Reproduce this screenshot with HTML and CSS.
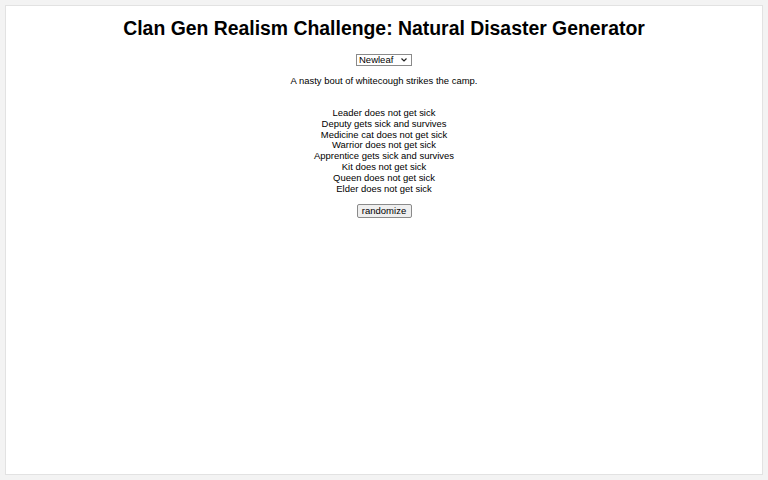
FILE: index.html
```html
<!DOCTYPE html>
<html>
<head>
<meta charset="utf-8">
<title>Natural Disaster Generator</title>
<link rel="stylesheet" href="styles.css">
</head>
<body>
<main class="page">
  <h1 class="title">Clan Gen Realism Challenge: Natural Disaster Generator</h1>
  <select class="season">
    <option>Newleaf</option>
    <option>Greenleaf</option>
    <option>Leaf-fall</option>
    <option>Leaf-bare</option>
  </select>
  <p class="event">A nasty bout of whitecough strikes the camp.</p>
  <div class="results">
    <div>Leader does not get sick</div>
    <div>Deputy gets sick and survives</div>
    <div>Medicine cat does not get sick</div>
    <div>Warrior does not get sick</div>
    <div>Apprentice gets sick and survives</div>
    <div>Kit does not get sick</div>
    <div>Queen does not get sick</div>
    <div>Elder does not get sick</div>
  </div>
  <button class="randomize">randomize</button>
</main>
</body>
</html>
```
FILE: styles.css
```css
html, body {
  margin: 0;
  padding: 0;
}

body {
  background: #f3f3f3;
  padding: 5px;
  font-family: "Liberation Sans", Arial, sans-serif;
  color: #000;
}

.page {
  box-sizing: border-box;
  height: 470px;
  background: #fff;
  border: 1px solid #e2e2e2;
  display: flex;
  flex-direction: column;
  align-items: center;
  text-align: center;
}

.title {
  margin: 10px 0 0;
  font-size: 19.4px;
  font-weight: bold;
  line-height: 24px;
}

/* compact dropdown with a small chevron on the right */
.season {
  appearance: none;
  -webkit-appearance: none;
  box-sizing: border-box;
  width: 56px;
  height: 12px;
  margin-top: 14px;
  padding: 0 0 0 2px;
  font-family: inherit;
  font-size: 9.5px;
  line-height: 10px;
  color: #000;
  border: 1px solid #8a8a8a;
  border-radius: 0;
  background-color: #fff;
  background-image: url("data:image/svg+xml,%3Csvg xmlns='http://www.w3.org/2000/svg' width='6' height='4' viewBox='0 0 6 4'%3E%3Cpath d='M0.5 0.5 L3 3 L5.5 0.5' fill='none' stroke='%23222' stroke-width='1.2'/%3E%3C/svg%3E");
  background-repeat: no-repeat;
  background-position: right 4px center;
}

.event {
  margin: 9px 0 0;
  font-size: 9.45px;
  line-height: 12px;
}

.results {
  margin-top: 21px;
  font-size: 9.45px;
  line-height: 10.8px;
}

.randomize {
  box-sizing: border-box;
  width: 55px;
  height: 14px;
  margin-top: 10px;
  padding: 0;
  font-family: inherit;
  font-size: 9.5px;
  line-height: 12px;
  color: #000;
  background: #efefef;
  border: 1px solid #8a8a8a;
  border-radius: 2px;
}
```
